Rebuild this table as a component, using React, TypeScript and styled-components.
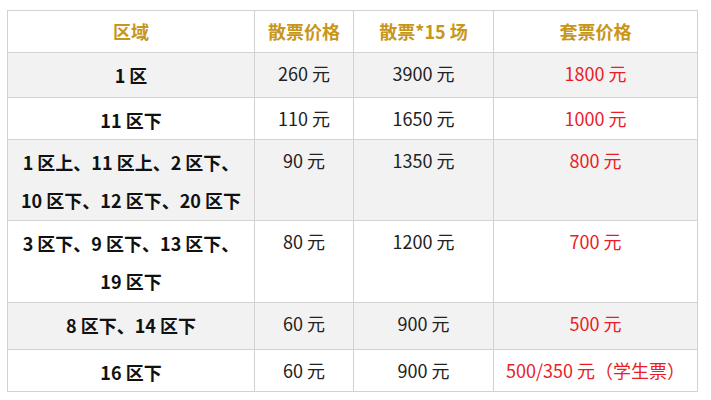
import React from 'react';
import styled, { createGlobalStyle } from 'styled-components';

const GlobalStyle = createGlobalStyle`
  html, body {
    margin: 0;
    padding: 0;
    background: #fff;
  }
  body {
    font-family: "Noto Sans CJK SC", "Open Sans", sans-serif;
  }
`;

interface PriceRow {
  area: string[];
  single: string;
  fifteen: string;
  pack: string;
  height: number;
  shaded: boolean;
}

const rows: PriceRow[] = [
  { area: ['1 区'], single: '260 元', fifteen: '3900 元', pack: '1800 元', height: 45, shaded: true },
  { area: ['11 区下'], single: '110 元', fifteen: '1650 元', pack: '1000 元', height: 40, shaded: false },
  {
    area: ['1 区上、11 区上、2 区下、', '10 区下、12 区下、20 区下'],
    single: '90 元',
    fifteen: '1350 元',
    pack: '800 元',
    height: 81,
    shaded: true,
  },
  {
    area: ['3 区下、9 区下、13 区下、', '19 区下'],
    single: '80 元',
    fifteen: '1200 元',
    pack: '700 元',
    height: 82,
    shaded: false,
  },
  { area: ['8 区下、14 区下'], single: '60 元', fifteen: '900 元', pack: '500 元', height: 47, shaded: true },
  { area: ['16 区下'], single: '60 元', fifteen: '900 元', pack: '500/350 元（学生票）', height: 41, shaded: false },
];

const App: React.FC = () => {
  return (
    <>
      <GlobalStyle />
      <Page>
        <PriceTable>
          <colgroup>
            <col style={{ width: 247 }} />
            <col style={{ width: 99 }} />
            <col style={{ width: 140 }} />
            <col style={{ width: 204 }} />
          </colgroup>
          <thead>
            <Row $height={42}>
              <HeadCell>区域</HeadCell>
              <HeadCell>散票价格</HeadCell>
              <HeadCell>散票*15 场</HeadCell>
              <HeadCell>套票价格</HeadCell>
            </Row>
          </thead>
          <tbody>
            {rows.map((r, i) => (
              <Row key={i} $height={r.height} $shaded={r.shaded}>
                <AreaCell>
                  {r.area.map((line, j) => (
                    <AreaLine key={j}>{line}</AreaLine>
                  ))}
                </AreaCell>
                <Cell>{r.single}</Cell>
                <Cell>{r.fifteen}</Cell>
                <Cell $red>{r.pack}</Cell>
              </Row>
            ))}
          </tbody>
        </PriceTable>
      </Page>
    </>
  );
};

export default App;

const Page = styled.div`
  padding: 10px 0 0 7px;
  width: 711px;
  height: 400px;
  box-sizing: border-box;
`;

const PriceTable = styled.table`
  border-collapse: collapse;
  table-layout: fixed;
  width: 691px;
  font-size: 18px;
  color: #222;
  td, th {
    border: 1px solid #d2d2d2;
    padding: 3px 0 0;
    text-align: center;
    vertical-align: top;
    line-height: 35px;
  }
`;

const Row = styled.tr<{ $height: number; $shaded?: boolean }>`
  height: ${(p) => p.$height}px;
  background: ${(p) => (p.$shaded ? '#f2f2f2' : '#fff')};
`;

const HeadCell = styled.th`
  color: #c8961a;
  font-weight: 700;
  font-size: 18px;
`;

const Cell = styled.td<{ $red?: boolean }>`
  color: ${(p) => (p.$red ? '#ea1c26' : '#222')};
`;

const AreaCell = styled.td`
  font-weight: 700;
  color: #111;
`;

const AreaLine = styled.div`
  line-height: 38px;
  white-space: nowrap;
`;
